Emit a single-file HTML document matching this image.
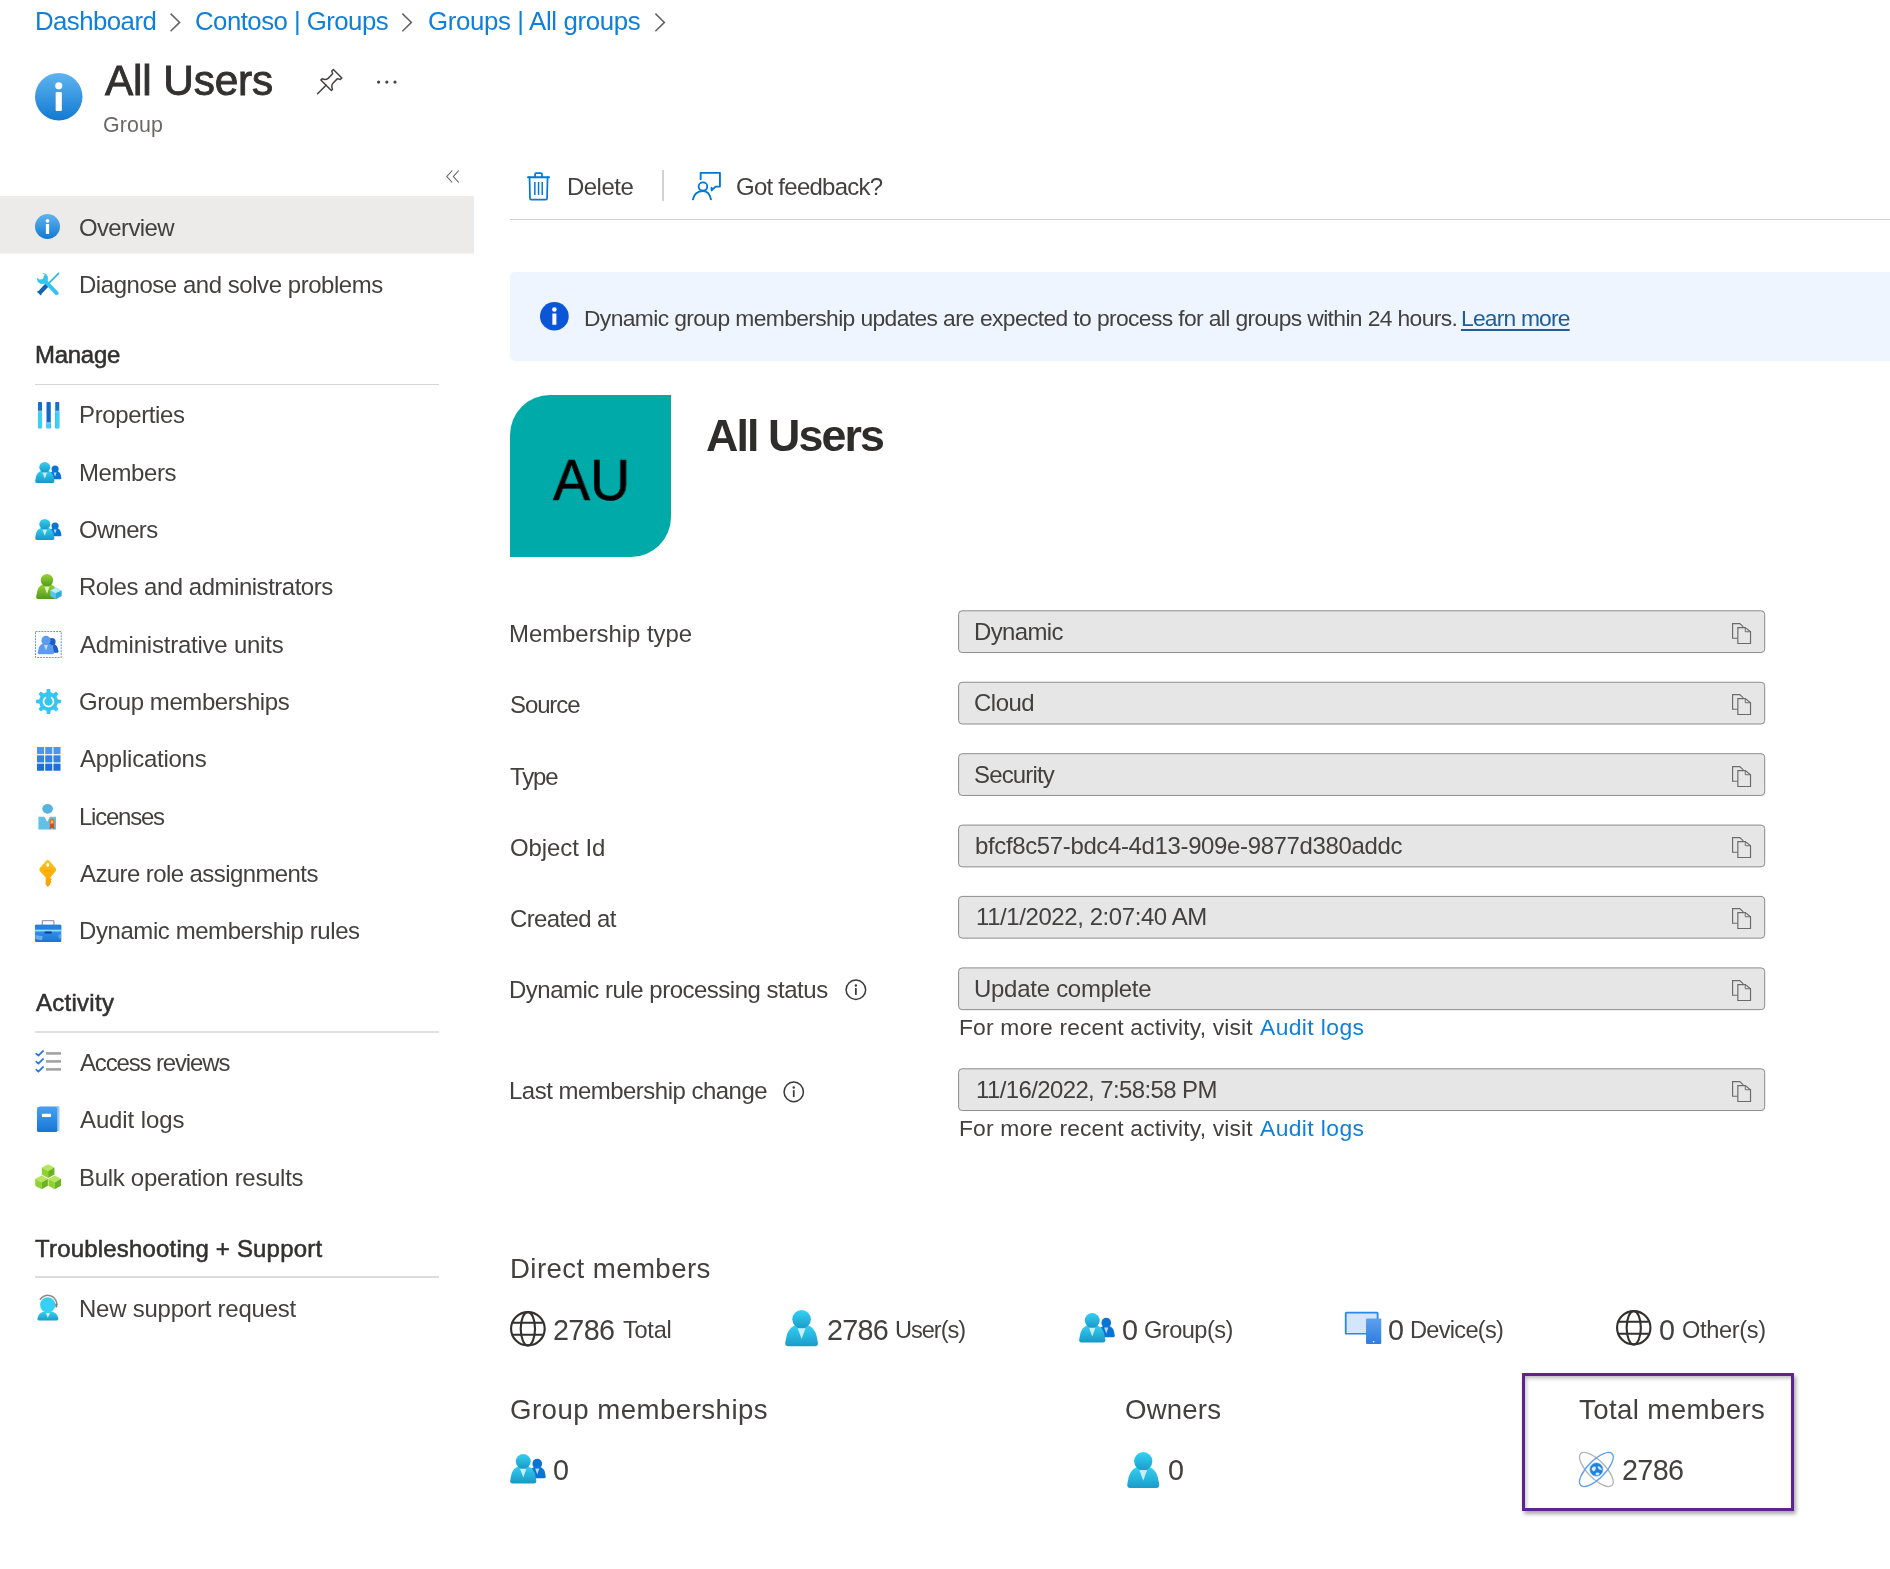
<!DOCTYPE html>
<html lang="en"><head><meta charset="utf-8"><title>All Users - Group</title>
<style>
html,body{margin:0;padding:0;background:#fff;overflow:hidden}
html{width:1890px;height:1569px}
body{width:1890px;height:1569px;position:relative;overflow:hidden;font-family:"Liberation Sans",sans-serif}
.abs,.ic,.t{position:absolute}
.ic{overflow:visible}
.t{white-space:pre;line-height:1;font-family:"Liberation Sans",sans-serif;-webkit-font-smoothing:antialiased;will-change:transform}
.inp{width:805.3px;height:40.6px;background:#e6e6e6;border:1px solid #8f8f8f;border-radius:3.5px}
</style></head>
<body>

<svg width="0" height="0" style="position:absolute">
<defs>
<linearGradient id="gInfo" x1="0" y1="0" x2="0" y2="1"><stop offset="0" stop-color="#5fb4f0"/><stop offset="1" stop-color="#1279d1"/></linearGradient>
<linearGradient id="gCy" x1="0" y1="0" x2="0" y2="1"><stop offset="0" stop-color="#34d3f6"/><stop offset="1" stop-color="#1b9bc9"/></linearGradient>
<linearGradient id="gCy2" x1="0" y1="0" x2="0" y2="1"><stop offset="0" stop-color="#34d1f4"/><stop offset="1" stop-color="#1997c5"/></linearGradient>
<linearGradient id="gBl" x1="0" y1="0" x2="0" y2="1"><stop offset="0" stop-color="#0f7bdc"/><stop offset="1" stop-color="#0a5fc0"/></linearGradient>
<linearGradient id="gGr" x1="0" y1="0" x2="0" y2="1"><stop offset="0" stop-color="#9ad22f"/><stop offset="1" stop-color="#4f9a1f"/></linearGradient>
<linearGradient id="gBook" x1="0" y1="0" x2="0" y2="1"><stop offset="0" stop-color="#46a0ee"/><stop offset="1" stop-color="#1676d6"/></linearGradient>
<linearGradient id="gDev" x1="0" y1="0" x2="0" y2="1"><stop offset="0" stop-color="#5ea0ef"/><stop offset="1" stop-color="#2d7de0"/></linearGradient>
<linearGradient id="gKey" x1="0" y1="0" x2="0" y2="1"><stop offset="0" stop-color="#ffc21a"/><stop offset="1" stop-color="#f5a100"/></linearGradient>
<linearGradient id="gBar" x1="0" y1="0" x2="0" y2="1"><stop offset="0" stop-color="#1a7fe0"/><stop offset="1" stop-color="#35cdf3"/></linearGradient>
</defs></svg>

<svg class="ic" style="left:0;top:0;width:1890px;height:1569px" viewBox="0 0 1890 1569"><rect x="0" y="196.1" width="474.1" height="57.6" fill="#edebe9"/><rect x="958.6" y="610.80" width="806.1" height="41.75" rx="3.6" fill="#e6e6e6" stroke="#8c8c8c" stroke-width="1"/><rect x="958.6" y="682.25" width="806.1" height="41.75" rx="3.6" fill="#e6e6e6" stroke="#8c8c8c" stroke-width="1"/><rect x="958.6" y="753.70" width="806.1" height="41.75" rx="3.6" fill="#e6e6e6" stroke="#8c8c8c" stroke-width="1"/><rect x="958.6" y="825.10" width="806.1" height="41.75" rx="3.6" fill="#e6e6e6" stroke="#8c8c8c" stroke-width="1"/><rect x="958.6" y="896.40" width="806.1" height="41.75" rx="3.6" fill="#e6e6e6" stroke="#8c8c8c" stroke-width="1"/><rect x="958.6" y="967.90" width="806.1" height="41.75" rx="3.6" fill="#e6e6e6" stroke="#8c8c8c" stroke-width="1"/><rect x="958.6" y="1068.80" width="806.1" height="41.75" rx="3.6" fill="#e6e6e6" stroke="#8c8c8c" stroke-width="1"/></svg>
<svg class="ic" style="left:35.00px;top:73.00px;width:47.50px;height:47.50px" viewBox="0 0 100 100" preserveAspectRatio="none"><circle cx="50" cy="50" r="50" fill="url(#gInfo)"/><circle cx="50" cy="27" r="7.5" fill="#fff"/><rect x="43.5" y="40" width="13" height="40" rx="2" fill="#fff"/></svg>
<svg class="ic" style="left:446.40px;top:170.30px;width:13.60px;height:13.00px" viewBox="0 0 100 100" preserveAspectRatio="none"><g fill="none" stroke="#605e5c" stroke-width="8"><path d="M46 4 L6 50 L46 96"/><path d="M94 4 L54 50 L94 96"/></g></svg>
<div class="abs" style="left:35px;top:384px;width:404px;height:1px;background:#d6d6d6"></div>
<div class="abs" style="left:35px;top:1031px;width:404px;height:2px;background:#e0e0e0"></div>
<div class="abs" style="left:35px;top:1276px;width:404px;height:2px;background:#dcdcdc"></div>
<svg class="ic" style="left:35.00px;top:213.75px;width:25.00px;height:25.00px" viewBox="0 0 100 100" preserveAspectRatio="none"><circle cx="50" cy="50" r="50" fill="url(#gInfo)"/><circle cx="50" cy="27" r="7.5" fill="#fff"/><rect x="43.5" y="40" width="13" height="40" rx="2" fill="#fff"/></svg>
<svg class="ic" style="left:36.00px;top:272.00px;width:24.00px;height:24.00px" viewBox="0 0 100 100" preserveAspectRatio="none"><g stroke-linecap="round"><path d="M94 6 L56 44" stroke="#30b8e6" stroke-width="7" fill="none"/><path d="M46 54 L14 88" stroke="#1262b3" stroke-width="18" fill="none" stroke-linecap="butt"/><path d="M8 82 L20 94" stroke="#1262b3" stroke-width="6"/><path d="M34 34 L86 88" stroke="#34c6ef" stroke-width="17" fill="none"/></g><circle cx="27" cy="27" r="23" fill="#34c6ef"/><path d="M-4 14 L16 -6 L36 14 L26 30 L12 30Z" fill="#fff" transform="rotate(-8 20 14)"/></svg>
<svg class="ic" style="left:37.50px;top:401.50px;width:21.25px;height:26.25px" viewBox="0 0 100 100" preserveAspectRatio="none"><rect x="0" y="0" width="19" height="100" rx="3" fill="#1570d2"/><rect x="0" y="36" width="19" height="64" fill="#3bd0f6"/><rect x="0" y="33" width="19" height="6" fill="#8fc4ee"/><rect x="40" y="0" width="20" height="100" rx="3" fill="#1266cc"/><rect x="40" y="80" width="20" height="20" fill="#3bd0f6"/><rect x="40" y="77" width="20" height="6" fill="#8fc4ee"/><rect x="81" y="0" width="19" height="100" rx="3" fill="#1570d2"/><rect x="81" y="36" width="19" height="64" fill="#3bd0f6"/><rect x="81" y="33" width="19" height="6" fill="#8fc4ee"/></svg>
<svg class="ic" style="left:35.00px;top:461.50px;width:26.75px;height:21.00px" viewBox="0 0 145 118" preserveAspectRatio="none"><g transform="translate(74.5,19.3) scale(0.69,0.71)"><path d="M50 43 C26 43 10 56 5 78 L1 98 Q-1 110 10 110 L90 110 Q101 110 99 98 L95 78 C90 56 74 43 50 43Z" fill="#0a74d4"/><circle cx="50" cy="28" r="28" fill="#0a74d4"/><path d="M38 55 L62 55 L50 88Z" fill="#cfe6fa" opacity="0.9"/></g><g transform="translate(0,0) scale(1.06,1.07)"><path d="M50 43 C26 43 10 56 5 78 L1 98 Q-1 110 10 110 L90 110 Q101 110 99 98 L95 78 C90 56 74 43 50 43Z" fill="url(#gCy2)"/><circle cx="50" cy="28" r="28" fill="url(#gCy2)"/><path d="M38 55 L62 55 L50 88Z" fill="#d8f3fb" opacity="0.9"/></g></svg>
<svg class="ic" style="left:35.00px;top:518.90px;width:26.75px;height:21.00px" viewBox="0 0 145 118" preserveAspectRatio="none"><g transform="translate(74.5,19.3) scale(0.69,0.71)"><path d="M50 43 C26 43 10 56 5 78 L1 98 Q-1 110 10 110 L90 110 Q101 110 99 98 L95 78 C90 56 74 43 50 43Z" fill="#0a74d4"/><circle cx="50" cy="28" r="28" fill="#0a74d4"/><path d="M38 55 L62 55 L50 88Z" fill="#cfe6fa" opacity="0.9"/></g><g transform="translate(0,0) scale(1.06,1.07)"><path d="M50 43 C26 43 10 56 5 78 L1 98 Q-1 110 10 110 L90 110 Q101 110 99 98 L95 78 C90 56 74 43 50 43Z" fill="url(#gCy2)"/><circle cx="50" cy="28" r="28" fill="url(#gCy2)"/><path d="M38 55 L62 55 L50 88Z" fill="#d8f3fb" opacity="0.9"/></g></svg>
<svg class="ic" style="left:35.75px;top:574.00px;width:25.50px;height:25.00px" viewBox="0 0 100 100" preserveAspectRatio="none"><g transform="translate(0,0) scale(0.86,0.91)"><path d="M50 43 C26 43 10 56 5 78 L1 98 Q-1 110 10 110 L90 110 Q101 110 99 98 L95 78 C90 56 74 43 50 43Z" fill="url(#gGr)"/><circle cx="50" cy="28" r="28" fill="url(#gGr)"/><path d="M38 55 L62 55 L50 88Z" fill="#eaf6d0" opacity="0.9"/></g><path d="M56 70 L78 58 L100 70 L100 92 L78 104 L56 92Z" fill="#56c7ee" transform="translate(0,-4)"/><path d="M56 70 L78 58 L100 70 L78 81Z" fill="#b9ecfa" transform="translate(0,-4)"/><path d="M78 81 L100 70 L100 92 L78 104Z" fill="#2fa9d8" transform="translate(0,-4)"/></svg>
<svg class="ic" style="left:35.00px;top:630.75px;width:26.75px;height:27.00px" viewBox="0 0 100 100" preserveAspectRatio="none"><rect x="2" y="2" width="96" height="96" fill="#fff" stroke="#2d7ddd" stroke-width="3" stroke-dasharray="7 4"/><g transform="translate(38,26) scale(0.5,0.5)"><path d="M50 43 C26 43 10 56 5 78 L1 98 Q-1 110 10 110 L90 110 Q101 110 99 98 L95 78 C90 56 74 43 50 43Z" fill="#1f5fc4"/><circle cx="50" cy="28" r="28" fill="#1f5fc4"/><path d="M38 55 L62 55 L50 88Z" fill="#9fc2ee" opacity="0.9"/></g><g transform="translate(10,18) scale(0.62,0.62)"><path d="M50 43 C26 43 10 56 5 78 L1 98 Q-1 110 10 110 L90 110 Q101 110 99 98 L95 78 C90 56 74 43 50 43Z" fill="#5c9cf0"/><circle cx="50" cy="28" r="28" fill="#5c9cf0"/><path d="M38 55 L62 55 L50 88Z" fill="#cfe1fa" opacity="0.9"/></g></svg>
<svg class="ic" style="left:35.75px;top:689.00px;width:25.00px;height:25.00px" viewBox="0 0 100 100" preserveAspectRatio="none"><path d="M41.7 12.9 L43.3 0.4 L56.7 0.4 L58.3 12.9 L70.4 17.9 L80.3 10.3 L89.7 19.7 L82.1 29.6 L87.1 41.7 L99.6 43.3 L99.6 56.7 L87.1 58.3 L82.1 70.4 L89.7 80.3 L80.3 89.7 L70.4 82.1 L58.3 87.1 L56.7 99.6 L43.3 99.6 L41.7 87.1 L29.6 82.1 L19.7 89.7 L10.3 80.3 L17.9 70.4 L12.9 58.3 L0.4 56.7 L0.4 43.3 L12.9 41.7 L17.9 29.6 L10.3 19.7 L19.7 10.3 L29.6 17.9Z" fill="#35c5ee"/><path d="M40 33 A20 20 0 1 0 60 33" fill="none" stroke="#fff" stroke-width="7"/></svg>
<svg class="ic" style="left:36.75px;top:747.00px;width:23.50px;height:23.75px" viewBox="0 0 100 100" preserveAspectRatio="none"><rect x="0" y="0" width="30" height="30" fill="#4a98ee"/><rect x="35" y="0" width="30" height="30" fill="#4a98ee"/><rect x="70" y="0" width="30" height="30" fill="#4a98ee"/><rect x="0" y="35" width="30" height="30" fill="#2f84e4"/><rect x="35" y="35" width="30" height="30" fill="#2f84e4"/><rect x="70" y="35" width="30" height="30" fill="#2f84e4"/><rect x="0" y="70" width="30" height="30" fill="#1a6fd8"/><rect x="35" y="70" width="30" height="30" fill="#1a6fd8"/><rect x="70" y="70" width="30" height="30" fill="#1a6fd8"/></svg>
<svg class="ic" style="left:37.50px;top:803.50px;width:20.00px;height:25.50px" viewBox="0 0 100 100" preserveAspectRatio="none"><ellipse cx="48" cy="19" rx="27" ry="19" fill="#54b4dd"/><path d="M2 50 L32 50 L46 70 L60 50 L90 50 L90 100 L2 100Z" fill="#62c0e6"/><circle cx="70" cy="70" r="13" fill="#e8701a"/><circle cx="70" cy="70" r="6" fill="#f9c06a"/><path d="M60 78 L58 100 L70 92 L82 100 L80 78Z" fill="#d4501a"/></svg>
<svg class="ic" style="left:38.75px;top:860.00px;width:17.50px;height:27.00px" viewBox="0 0 100 104" preserveAspectRatio="none"><path d="M50 0 Q56 0 60 4 L96 32 Q100 36 96 42 L66 66 L66 70 L74 74 L66 80 L72 86 L66 90 L62 96 L50 104 L38 94 L38 66 L4 42 Q0 36 4 32 L40 4 Q44 0 50 0Z" fill="url(#gKey)"/><rect x="30" y="38" width="40" height="7" rx="3" fill="#f09a00" opacity="0.55"/><circle cx="50" cy="19" r="8" fill="#fff"/></svg>
<svg class="ic" style="left:35.00px;top:920.00px;width:26.25px;height:22.00px" viewBox="0 0 100 100" preserveAspectRatio="none"><rect x="28" y="3" width="44" height="24" rx="2" fill="none" stroke="#a0a0a0" stroke-width="5"/><rect x="0" y="22" width="100" height="78" rx="4" fill="url(#gBook)"/><rect x="0" y="22" width="100" height="26" rx="4" fill="#2b7fe0"/><rect x="0" y="44" width="100" height="8" fill="#86e2f8"/><path d="M2 68 L30 74 L26 92 L2 88Z" fill="#7db6f4" opacity="0.8"/><path d="M100 64 A11 11 0 0 0 100 86Z" fill="#6aaaf0" opacity="0.8"/><rect x="36" y="52" width="28" height="9" rx="3" fill="#0d3f8c"/></svg>
<svg class="ic" style="left:35.00px;top:1050.00px;width:26.00px;height:23.50px" viewBox="0 0 100 100" preserveAspectRatio="none"><path d="M3 14 L13 24 L33 2" fill="none" stroke="#1b74e0" stroke-width="7"/><rect x="42" y="9" width="58" height="11" fill="#a3a3a3"/><path d="M3 48 L13 58 L33 36" fill="none" stroke="#1b74e0" stroke-width="7"/><rect x="42" y="43" width="58" height="11" fill="#a3a3a3"/><path d="M3 82 L13 92 L33 70" fill="none" stroke="#1b74e0" stroke-width="7"/><rect x="42" y="77" width="58" height="11" fill="#a3a3a3"/></svg>
<svg class="ic" style="left:37.00px;top:1106.00px;width:22.50px;height:26.00px" viewBox="0 0 100 100" preserveAspectRatio="none"><rect x="8" y="0" width="92" height="96" rx="6" fill="#9ccaf6"/><rect x="0" y="4" width="90" height="96" rx="6" fill="url(#gBook)"/><rect x="22" y="30" width="40" height="12" rx="2" fill="#fff"/></svg>
<svg class="ic" style="left:35.00px;top:1163.75px;width:26.25px;height:26.25px" viewBox="0 0 100 100" preserveAspectRatio="none"><path d="M50 0.5999999999999979 L74.0 13.559999999999999 L50 27 L26.0 13.559999999999999Z" fill="#b7e65c"/><path d="M26.0 13.559999999999999 L50 27 L50 53.400000000000006 L26.0 39.96Z" fill="#8fd12f"/><path d="M74.0 13.559999999999999 L50 27 L50 53.400000000000006 L74.0 39.96Z" fill="#6bb31f"/><path d="M25 43.599999999999994 L49.0 56.56 L25 70 L1.0 56.56Z" fill="#b7e65c"/><path d="M1.0 56.56 L25 70 L25 96.4 L1.0 82.96000000000001Z" fill="#8fd12f"/><path d="M49.0 56.56 L25 70 L25 96.4 L49.0 82.96000000000001Z" fill="#6bb31f"/><path d="M75 43.599999999999994 L99.0 56.56 L75 70 L51.0 56.56Z" fill="#b7e65c"/><path d="M51.0 56.56 L75 70 L75 96.4 L51.0 82.96000000000001Z" fill="#8fd12f"/><path d="M99.0 56.56 L75 70 L75 96.4 L99.0 82.96000000000001Z" fill="#6bb31f"/></svg>
<svg class="ic" style="left:37.20px;top:1293.50px;width:21.80px;height:27.00px" viewBox="0 0 100 125" preserveAspectRatio="none"><path d="M13 27 A42 42 0 0 1 91 52" fill="none" stroke="#8c8c8c" stroke-width="7"/><path d="M50 80 C30 80 12 86 6 102 L2 114 Q1 123 9 123 L91 123 Q99 123 98 114 L94 102 C88 86 70 80 50 80Z" fill="url(#gCy)"/><circle cx="49" cy="50" r="35" fill="#36d0f5"/><path d="M41 88 L59 88 L50 110Z" fill="#e6f8fd"/><rect x="84" y="44" width="9" height="18" rx="3" fill="#7a7a7a"/></svg>
<svg class="ic" style="left:527.30px;top:171.80px;width:23.10px;height:28.60px" viewBox="0 0 100 120" preserveAspectRatio="none"><g fill="none" stroke="#0078d4" stroke-width="7.5" stroke-linejoin="round" stroke-linecap="round"><path d="M4 22 L96 22"/><path d="M35 22 L35 9 Q35 5 39 5 L61 5 Q65 5 65 9 L65 22"/><path d="M11 22 L13 110 Q13 116 19 116 L81 116 Q87 116 87 110 L89 22"/><path d="M34 42 L34 96" stroke-width="6.5" stroke-linecap="butt"/><path d="M50 42 L50 96" stroke-width="6.5" stroke-linecap="butt"/><path d="M66 42 L66 96" stroke-width="6.5" stroke-linecap="butt"/></g></svg>
<div class="abs" style="left:662px;top:170px;width:2px;height:31px;background:#d4d2d0"></div>
<svg class="ic" style="left:692.40px;top:172.00px;width:28.80px;height:28.00px" viewBox="0 0 100 100" preserveAspectRatio="none"><g fill="none" stroke="#0078d4" stroke-width="6.5" stroke-linejoin="round" stroke-linecap="round"><path d="M30 26 L30 3 L97 3 L97 52 L82 52 L68 66 L68 56"/><circle cx="38" cy="52" r="15"/><path d="M3 98 C8 74 24 68 38 68 C52 68 62 76 66 98"/></g></svg>
<div class="abs" style="left:510px;top:218.8px;width:1380px;height:1px;background:#d2d0ce"></div>
<div class="abs" style="left:510px;top:272px;width:1380px;height:89px;background:#eff5fe;border-radius:5px 0 0 5px"></div>
<svg class="ic" style="left:540.00px;top:302.00px;width:28.75px;height:28.50px" viewBox="0 0 100 100" preserveAspectRatio="none"><circle cx="50" cy="50" r="50" fill="#0b56d6"/><circle cx="50" cy="26" r="8" fill="#fff"/><rect x="43" y="40" width="14" height="40" rx="1" fill="#fff"/></svg>
<div class="abs" style="left:510px;top:395px;width:161.3px;height:162px;background:#00aaa8;border-radius:40px 0 40px 0"></div>
<svg class="ic" style="left:1731.50px;top:622.80px;width:19.50px;height:21.30px" viewBox="0 0 100 112" preserveAspectRatio="none"><g fill="none" stroke="#6b6b6b" stroke-width="6" stroke-linejoin="miter"><path d="M28 80 L3 80 L3 3 L40 3 L58 20"/><path d="M30 24 L68 24 L95 46 L95 108 L30 108Z" fill="#e6e6e6"/><path d="M68 24 L68 46 L95 46" stroke-width="5"/></g></svg>
<svg class="ic" style="left:1731.50px;top:694.25px;width:19.50px;height:21.30px" viewBox="0 0 100 112" preserveAspectRatio="none"><g fill="none" stroke="#6b6b6b" stroke-width="6" stroke-linejoin="miter"><path d="M28 80 L3 80 L3 3 L40 3 L58 20"/><path d="M30 24 L68 24 L95 46 L95 108 L30 108Z" fill="#e6e6e6"/><path d="M68 24 L68 46 L95 46" stroke-width="5"/></g></svg>
<svg class="ic" style="left:1731.50px;top:765.70px;width:19.50px;height:21.30px" viewBox="0 0 100 112" preserveAspectRatio="none"><g fill="none" stroke="#6b6b6b" stroke-width="6" stroke-linejoin="miter"><path d="M28 80 L3 80 L3 3 L40 3 L58 20"/><path d="M30 24 L68 24 L95 46 L95 108 L30 108Z" fill="#e6e6e6"/><path d="M68 24 L68 46 L95 46" stroke-width="5"/></g></svg>
<svg class="ic" style="left:1731.50px;top:837.10px;width:19.50px;height:21.30px" viewBox="0 0 100 112" preserveAspectRatio="none"><g fill="none" stroke="#6b6b6b" stroke-width="6" stroke-linejoin="miter"><path d="M28 80 L3 80 L3 3 L40 3 L58 20"/><path d="M30 24 L68 24 L95 46 L95 108 L30 108Z" fill="#e6e6e6"/><path d="M68 24 L68 46 L95 46" stroke-width="5"/></g></svg>
<svg class="ic" style="left:1731.50px;top:908.40px;width:19.50px;height:21.30px" viewBox="0 0 100 112" preserveAspectRatio="none"><g fill="none" stroke="#6b6b6b" stroke-width="6" stroke-linejoin="miter"><path d="M28 80 L3 80 L3 3 L40 3 L58 20"/><path d="M30 24 L68 24 L95 46 L95 108 L30 108Z" fill="#e6e6e6"/><path d="M68 24 L68 46 L95 46" stroke-width="5"/></g></svg>
<svg class="ic" style="left:1731.50px;top:979.90px;width:19.50px;height:21.30px" viewBox="0 0 100 112" preserveAspectRatio="none"><g fill="none" stroke="#6b6b6b" stroke-width="6" stroke-linejoin="miter"><path d="M28 80 L3 80 L3 3 L40 3 L58 20"/><path d="M30 24 L68 24 L95 46 L95 108 L30 108Z" fill="#e6e6e6"/><path d="M68 24 L68 46 L95 46" stroke-width="5"/></g></svg>
<svg class="ic" style="left:1731.50px;top:1080.80px;width:19.50px;height:21.30px" viewBox="0 0 100 112" preserveAspectRatio="none"><g fill="none" stroke="#6b6b6b" stroke-width="6" stroke-linejoin="miter"><path d="M28 80 L3 80 L3 3 L40 3 L58 20"/><path d="M30 24 L68 24 L95 46 L95 108 L30 108Z" fill="#e6e6e6"/><path d="M68 24 L68 46 L95 46" stroke-width="5"/></g></svg>
<svg class="ic" style="left:844.50px;top:978.75px;width:21.75px;height:21.50px" viewBox="0 0 100 100" preserveAspectRatio="none"><circle cx="50" cy="50" r="45" fill="none" stroke="#3b3a39" stroke-width="7"/><circle cx="50" cy="30" r="5.5" fill="#3b3a39"/><rect x="46" y="42" width="8" height="32" fill="#3b3a39"/></svg>
<svg class="ic" style="left:783.00px;top:1080.75px;width:21.50px;height:21.75px" viewBox="0 0 100 100" preserveAspectRatio="none"><circle cx="50" cy="50" r="45" fill="none" stroke="#3b3a39" stroke-width="7"/><circle cx="50" cy="30" r="5.5" fill="#3b3a39"/><rect x="46" y="42" width="8" height="32" fill="#3b3a39"/></svg>
<svg class="ic" style="left:510.00px;top:1310.75px;width:35.75px;height:35.50px" viewBox="0 0 100 100" preserveAspectRatio="none"><g fill="none" stroke="#323130" stroke-width="6"><circle cx="50" cy="50" r="47"/><ellipse cx="50" cy="50" rx="20" ry="47"/><path d="M8 33 L92 33 M8 67 L92 67"/></g></svg>
<svg class="ic" style="left:785.00px;top:1310.00px;width:33.20px;height:36.25px" viewBox="0 0 100 110" preserveAspectRatio="none"><path d="M50 43 C26 43 10 56 5 78 L1 98 Q-1 110 10 110 L90 110 Q101 110 99 98 L95 78 C90 56 74 43 50 43Z" fill="url(#gCy)"/><circle cx="50" cy="28" r="28" fill="url(#gCy)"/><path d="M38 55 L62 55 L50 88Z" fill="#d8f3fb" opacity="0.9"/></svg>
<svg class="ic" style="left:1078.75px;top:1313.25px;width:36.25px;height:29.50px" viewBox="0 0 145 118" preserveAspectRatio="none"><g transform="translate(74.5,19.3) scale(0.69,0.71)"><path d="M50 43 C26 43 10 56 5 78 L1 98 Q-1 110 10 110 L90 110 Q101 110 99 98 L95 78 C90 56 74 43 50 43Z" fill="#0a74d4"/><circle cx="50" cy="28" r="28" fill="#0a74d4"/><path d="M38 55 L62 55 L50 88Z" fill="#cfe6fa" opacity="0.9"/></g><g transform="translate(0,0) scale(1.06,1.07)"><path d="M50 43 C26 43 10 56 5 78 L1 98 Q-1 110 10 110 L90 110 Q101 110 99 98 L95 78 C90 56 74 43 50 43Z" fill="url(#gCy2)"/><circle cx="50" cy="28" r="28" fill="url(#gCy2)"/><path d="M38 55 L62 55 L50 88Z" fill="#d8f3fb" opacity="0.9"/></g></svg>
<svg class="ic" style="left:1345.00px;top:1312.00px;width:36.25px;height:32.00px" viewBox="0 0 100 100" preserveAspectRatio="none"><rect x="2" y="2" width="88" height="66" rx="2" fill="#d3e6fb" stroke="#2d86e8" stroke-width="5"/><rect x="58" y="20" width="42" height="80" rx="3" fill="url(#gDev)"/><circle cx="79" cy="93" r="2.5" fill="#fff"/></svg>
<svg class="ic" style="left:1616.25px;top:1310.25px;width:35.50px;height:35.50px" viewBox="0 0 100 100" preserveAspectRatio="none"><g fill="none" stroke="#323130" stroke-width="6"><circle cx="50" cy="50" r="47"/><ellipse cx="50" cy="50" rx="20" ry="47"/><path d="M8 33 L92 33 M8 67 L92 67"/></g></svg>
<svg class="ic" style="left:510.00px;top:1454.25px;width:36.25px;height:29.50px" viewBox="0 0 145 118" preserveAspectRatio="none"><g transform="translate(74.5,19.3) scale(0.69,0.71)"><path d="M50 43 C26 43 10 56 5 78 L1 98 Q-1 110 10 110 L90 110 Q101 110 99 98 L95 78 C90 56 74 43 50 43Z" fill="#0a74d4"/><circle cx="50" cy="28" r="28" fill="#0a74d4"/><path d="M38 55 L62 55 L50 88Z" fill="#cfe6fa" opacity="0.9"/></g><g transform="translate(0,0) scale(1.06,1.07)"><path d="M50 43 C26 43 10 56 5 78 L1 98 Q-1 110 10 110 L90 110 Q101 110 99 98 L95 78 C90 56 74 43 50 43Z" fill="url(#gCy2)"/><circle cx="50" cy="28" r="28" fill="url(#gCy2)"/><path d="M38 55 L62 55 L50 88Z" fill="#d8f3fb" opacity="0.9"/></g></svg>
<svg class="ic" style="left:1127.00px;top:1451.50px;width:32.50px;height:36.00px" viewBox="0 0 100 110" preserveAspectRatio="none"><path d="M50 43 C26 43 10 56 5 78 L1 98 Q-1 110 10 110 L90 110 Q101 110 99 98 L95 78 C90 56 74 43 50 43Z" fill="url(#gCy)"/><circle cx="50" cy="28" r="28" fill="url(#gCy)"/><path d="M38 55 L62 55 L50 88Z" fill="#d8f3fb" opacity="0.9"/></svg>
<svg class="ic" style="left:1578.75px;top:1452.00px;width:34.75px;height:35.00px" viewBox="0 0 100 100" preserveAspectRatio="none"><ellipse cx="50" cy="50" rx="25" ry="64" fill="none" stroke="#b4b4b4" stroke-width="3.8" transform="rotate(-45 50 50)"/><ellipse cx="50" cy="50" rx="25" ry="64" fill="none" stroke="#5b9ff0" stroke-width="3.8" transform="rotate(45 50 50)"/><circle cx="50" cy="50" r="19" fill="#1f80de"/><circle cx="50" cy="50" r="19" fill="none" stroke="#7ab8f2" stroke-width="2"/><path d="M36 50 Q38 40 48 42 Q50 52 42 56Z M54 40 Q64 42 66 52 Q58 52 54 46Z M48 60 Q56 56 60 62 Q54 68 48 66Z" fill="#d8ecfd"/></svg>
<div class="abs" style="left:1522.3px;top:1373.3px;width:265.5px;height:131.5px;border:3px solid #5c2491;box-shadow:2px 3px 4px rgba(0,0,0,0.35), inset 2px 3px 4px -1px rgba(0,0,0,0.28)"></div>
<svg class="ic" style="left:0;top:0;width:1890px;height:1569px" viewBox="0 0 1890 1569"><path d="M170.6 13.6 L179.6 22.4 L170.6 31.2" fill="none" stroke="#63615f" stroke-width="1.5"/><path d="M402.4 13.6 L411.4 22.4 L402.4 31.2" fill="none" stroke="#63615f" stroke-width="1.5"/><path d="M655.4 13.6 L664.4 22.4 L655.4 31.2" fill="none" stroke="#63615f" stroke-width="1.5"/><g transform="translate(337.6,73.7) rotate(45)" fill="none" stroke="#444240" stroke-width="1.5" stroke-linejoin="round" stroke-linecap="round"><path d="M-6 0 L6 0 L6 2.2 L3.4 3.6 L3.4 10 Q3.6 13 7.4 14.6 L7.4 16.3 L-7.4 16.3 L-7.4 14.6 Q-3.6 13 -3.4 10 L-3.4 3.6 L-6 2.2Z"/><path d="M0 16.3 L0 28.3"/></g><circle cx="378.6" cy="82.1" r="1.6" fill="#484644"/><circle cx="386.8" cy="82.1" r="1.6" fill="#484644"/><circle cx="395.0" cy="82.1" r="1.6" fill="#484644"/></svg>
<span class="t" style="left:34.59px;top:9.11px;font-size:25.8px;letter-spacing:-0.555px;color:#0f7fd8;">Dashboard</span>
<span class="t" style="left:195.30px;top:9.11px;font-size:25.8px;letter-spacing:-0.541px;color:#0f7fd8;">Contoso | Groups</span>
<span class="t" style="left:427.80px;top:9.11px;font-size:25.8px;letter-spacing:-0.347px;color:#0f7fd8;">Groups | All groups</span>
<span class="t" style="left:105.00px;top:60.32px;font-size:42.39px;letter-spacing:-0.167px;color:#323130;-webkit-text-stroke:0.9px #323130;">All Users</span>
<span class="t" style="left:103.00px;top:114.50px;font-size:21.38px;letter-spacing:0.120px;color:#6b6967;">Group</span>
<span class="t" style="left:79.44px;top:216.12px;font-size:23.96px;letter-spacing:-0.623px;color:#43413f;">Overview</span>
<span class="t" style="left:79.05px;top:273.12px;font-size:23.96px;letter-spacing:-0.436px;color:#43413f;">Diagnose and solve problems</span>
<span class="t" style="left:79.05px;top:403.12px;font-size:23.96px;letter-spacing:-0.349px;color:#43413f;">Properties</span>
<span class="t" style="left:79.05px;top:460.62px;font-size:23.96px;letter-spacing:-0.391px;color:#43413f;">Members</span>
<span class="t" style="left:79.44px;top:517.82px;font-size:23.96px;letter-spacing:-0.677px;color:#43413f;">Owners</span>
<span class="t" style="left:79.05px;top:575.22px;font-size:23.96px;letter-spacing:-0.466px;color:#43413f;">Roles and administrators</span>
<span class="t" style="left:79.89px;top:632.62px;font-size:23.96px;letter-spacing:-0.213px;color:#43413f;">Administrative units</span>
<span class="t" style="left:79.44px;top:689.92px;font-size:23.96px;letter-spacing:-0.397px;color:#43413f;">Group memberships</span>
<span class="t" style="left:79.89px;top:747.22px;font-size:23.96px;letter-spacing:-0.225px;color:#43413f;">Applications</span>
<span class="t" style="left:79.05px;top:804.62px;font-size:23.96px;letter-spacing:-1.216px;color:#43413f;">Licenses</span>
<span class="t" style="left:79.89px;top:862.02px;font-size:23.96px;letter-spacing:-0.567px;color:#43413f;">Azure role assignments</span>
<span class="t" style="left:79.05px;top:919.32px;font-size:23.96px;letter-spacing:-0.398px;color:#43413f;">Dynamic membership rules</span>
<span class="t" style="left:79.89px;top:1050.72px;font-size:23.96px;letter-spacing:-1.128px;color:#43413f;">Access reviews</span>
<span class="t" style="left:79.89px;top:1108.22px;font-size:23.96px;letter-spacing:-0.090px;color:#43413f;">Audit logs</span>
<span class="t" style="left:79.05px;top:1165.72px;font-size:23.96px;letter-spacing:-0.277px;color:#43413f;">Bulk operation results</span>
<span class="t" style="left:79.05px;top:1297.22px;font-size:23.96px;letter-spacing:-0.214px;color:#43413f;">New support request</span>
<span class="t" style="left:35.20px;top:342.87px;font-size:23.96px;letter-spacing:-0.248px;color:#43413f;-webkit-text-stroke:0.55px #323130;color:#323130;">Manage</span>
<span class="t" style="left:35.50px;top:990.87px;font-size:23.96px;letter-spacing:0.288px;color:#43413f;-webkit-text-stroke:0.55px #323130;color:#323130;">Activity</span>
<span class="t" style="left:35.20px;top:1237.22px;font-size:23.96px;letter-spacing:0.207px;color:#43413f;-webkit-text-stroke:0.55px #323130;color:#323130;">Troubleshooting + Support</span>
<span class="t" style="left:566.60px;top:174.72px;font-size:23.96px;letter-spacing:-0.504px;color:#43413f;">Delete</span>
<span class="t" style="left:735.75px;top:174.72px;font-size:23.96px;letter-spacing:-0.727px;color:#43413f;">Got feedback?</span>
<span class="t" style="left:584.40px;top:306.86px;font-size:22.85px;letter-spacing:-0.624px;color:#43413f;">Dynamic group membership updates are expected to process for all groups within 24 hours.</span>
<span class="t" style="left:1461.20px;top:306.86px;font-size:22.85px;letter-spacing:-0.813px;color:#1d5e9a;text-decoration:underline;text-decoration-thickness:1.5px;text-underline-offset:3px;">Learn more</span>
<span class="t" style="left:552.50px;top:450.56px;font-size:58.05px;letter-spacing:0.000px;color:#000;-webkit-text-stroke:0.6px #000;transform:scaleX(0.9548);transform-origin:0 0;">AU</span>
<span class="t" style="left:706.30px;top:413.39px;font-size:44.78px;letter-spacing:-1.885px;color:#2f2d2b;font-weight:700;">All Users</span>
<span class="t" style="left:509.45px;top:622.22px;font-size:23.96px;letter-spacing:-0.046px;color:#43413f;">Membership type</span>
<span class="t" style="left:509.96px;top:693.42px;font-size:23.96px;letter-spacing:-1.086px;color:#43413f;">Source</span>
<span class="t" style="left:509.90px;top:764.72px;font-size:23.96px;letter-spacing:-1.135px;color:#43413f;">Type</span>
<span class="t" style="left:509.64px;top:835.92px;font-size:23.96px;letter-spacing:-0.072px;color:#43413f;">Object Id</span>
<span class="t" style="left:509.64px;top:907.22px;font-size:23.96px;letter-spacing:-0.609px;color:#43413f;">Created at</span>
<span class="t" style="left:509.45px;top:977.92px;font-size:23.96px;letter-spacing:-0.472px;color:#43413f;">Dynamic rule processing status</span>
<span class="t" style="left:509.45px;top:1078.97px;font-size:23.96px;letter-spacing:-0.495px;color:#43413f;">Last membership change</span>
<span class="t" style="left:974.45px;top:619.82px;font-size:23.96px;letter-spacing:-0.624px;color:#43413f;">Dynamic</span>
<span class="t" style="left:974.14px;top:691.27px;font-size:23.96px;letter-spacing:-0.488px;color:#43413f;">Cloud</span>
<span class="t" style="left:974.46px;top:762.72px;font-size:23.96px;letter-spacing:-0.830px;color:#43413f;">Security</span>
<span class="t" style="left:975.20px;top:834.12px;font-size:23.96px;letter-spacing:-0.346px;color:#43413f;">bfcf8c57-bdc4-4d13-909e-9877d380addc</span>
<span class="t" style="left:976.31px;top:905.42px;font-size:23.96px;letter-spacing:-0.403px;color:#43413f;">11/1/2022, 2:07:40 AM</span>
<span class="t" style="left:974.45px;top:976.92px;font-size:23.96px;letter-spacing:-0.251px;color:#43413f;">Update complete</span>
<span class="t" style="left:976.31px;top:1077.82px;font-size:23.96px;letter-spacing:-0.599px;color:#43413f;">11/16/2022, 7:58:58 PM</span>
<span class="t" style="left:959.30px;top:1015.66px;font-size:22.85px;letter-spacing:0.155px;color:#43413f;">For more recent activity, visit</span>
<span class="t" style="left:1259.50px;top:1015.66px;font-size:22.85px;letter-spacing:0.400px;color:#0f7fd8;">Audit logs</span>
<span class="t" style="left:959.30px;top:1116.91px;font-size:22.85px;letter-spacing:0.155px;color:#43413f;">For more recent activity, visit</span>
<span class="t" style="left:1259.50px;top:1116.91px;font-size:22.85px;letter-spacing:0.400px;color:#0f7fd8;">Audit logs</span>
<span class="t" style="left:510.05px;top:1255.35px;font-size:27.64px;letter-spacing:0.417px;color:#43413f;">Direct members</span>
<span class="t" style="left:509.80px;top:1396.10px;font-size:27.64px;letter-spacing:0.460px;color:#43413f;">Group memberships</span>
<span class="t" style="left:1125.25px;top:1396.10px;font-size:27.64px;letter-spacing:0.177px;color:#43413f;">Owners</span>
<span class="t" style="left:1579.25px;top:1396.10px;font-size:27.64px;letter-spacing:0.388px;color:#43413f;">Total members</span>
<span class="t" style="left:552.75px;top:1315.66px;font-size:28.75px;letter-spacing:-0.656px;color:#43413f;">2786</span>
<span class="t" style="left:622.50px;top:1318.78px;font-size:23.59px;letter-spacing:-0.266px;color:#43413f;">Total</span>
<span class="t" style="left:826.75px;top:1315.66px;font-size:28.75px;letter-spacing:-0.739px;color:#43413f;">2786</span>
<span class="t" style="left:895.00px;top:1318.78px;font-size:23.59px;letter-spacing:-1.029px;color:#43413f;">User(s)</span>
<span class="t" style="left:1122.00px;top:1315.66px;font-size:28.75px;letter-spacing:0.000px;color:#43413f;">0</span>
<span class="t" style="left:1144.00px;top:1318.78px;font-size:23.59px;letter-spacing:-0.524px;color:#43413f;">Group(s)</span>
<span class="t" style="left:1388.25px;top:1315.66px;font-size:28.75px;letter-spacing:0.000px;color:#43413f;">0</span>
<span class="t" style="left:1410.00px;top:1318.78px;font-size:23.59px;letter-spacing:-0.714px;color:#43413f;">Device(s)</span>
<span class="t" style="left:1659.00px;top:1315.66px;font-size:28.75px;letter-spacing:0.000px;color:#43413f;">0</span>
<span class="t" style="left:1681.50px;top:1318.78px;font-size:23.59px;letter-spacing:-0.337px;color:#43413f;">Other(s)</span>
<span class="t" style="left:553.00px;top:1456.46px;font-size:28.75px;letter-spacing:0.000px;color:#43413f;">0</span>
<span class="t" style="left:1168.25px;top:1456.46px;font-size:28.75px;letter-spacing:0.000px;color:#43413f;">0</span>
<span class="t" style="left:1621.50px;top:1456.46px;font-size:28.75px;letter-spacing:-0.656px;color:#43413f;">2786</span>
</body></html>
